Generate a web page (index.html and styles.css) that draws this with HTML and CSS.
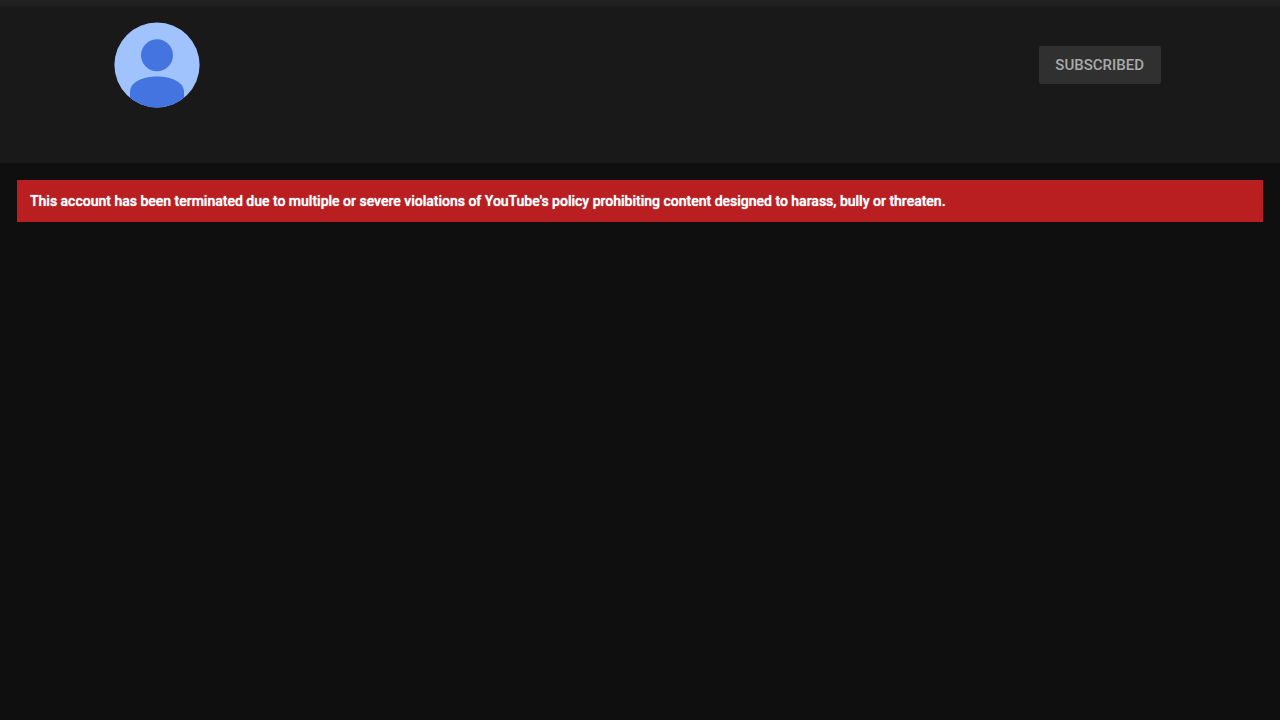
FILE: index.html
```html
<!DOCTYPE html>
<html lang="en">
<head>
    <meta charset="UTF-8">
    <meta name="viewport" content="width=device-width, initial-scale=1.0">
    <title>YouTube</title>
    <link rel="stylesheet" href="styles.css">
</head>
<body>
    <header class="channel-header">
        <svg class="avatar" viewBox="0 0 86 86" aria-hidden="true">
            <defs>
                <clipPath id="avatar-clip"><circle cx="43" cy="43" r="42.6"/></clipPath>
            </defs>
            <g clip-path="url(#avatar-clip)">
                <rect width="86" height="86" fill="#a1c3fd"/>
                <circle cx="43" cy="33.3" r="16" fill="#4374e0"/>
                <path d="M16 86V70C16 60 29 54.5 43 54.5S70 60 70 70V86Z" fill="#4374e0"/>
            </g>
        </svg>
        <button type="button" class="subscribe-button">SUBSCRIBED</button>
    </header>
    <main>
        <div class="alert" role="alert">This account has been terminated due to multiple or severe violations of YouTube's policy prohibiting content designed to harass, bully or threaten.</div>
    </main>
</body>
</html>
```

FILE: styles.css
```css
body {
    margin: 0;
    min-height: 100vh;
    background-color: #0f0f0f;
    font-family: Roboto, Arial, sans-serif;
}

.channel-header {
    display: flex;
    justify-content: space-between;
    align-items: center;
    padding: 16px 119px 55px 114px;
    border-top: 6px solid #202020;
    background-color: #191919;
}

.avatar {
    width: 86px;
    height: 86px;
}

.subscribe-button {
    padding: 9px 17px 9px 16px;
    border: none;
    border-radius: 2px;
    background-color: #303030;
    color: #aaa;
    font-family: inherit;
    font-size: 15px;
    font-weight: 500;
    line-height: 20px;
    cursor: pointer;
}

main {
    padding: 17px;
}

.alert {
    padding: 11px 13px;
    background-color: #b91f20;
    color: #fff;
    font-size: 14px;
    font-weight: 500;
    line-height: 20px;
    text-shadow: 0 0 1px #fff;
}
```
